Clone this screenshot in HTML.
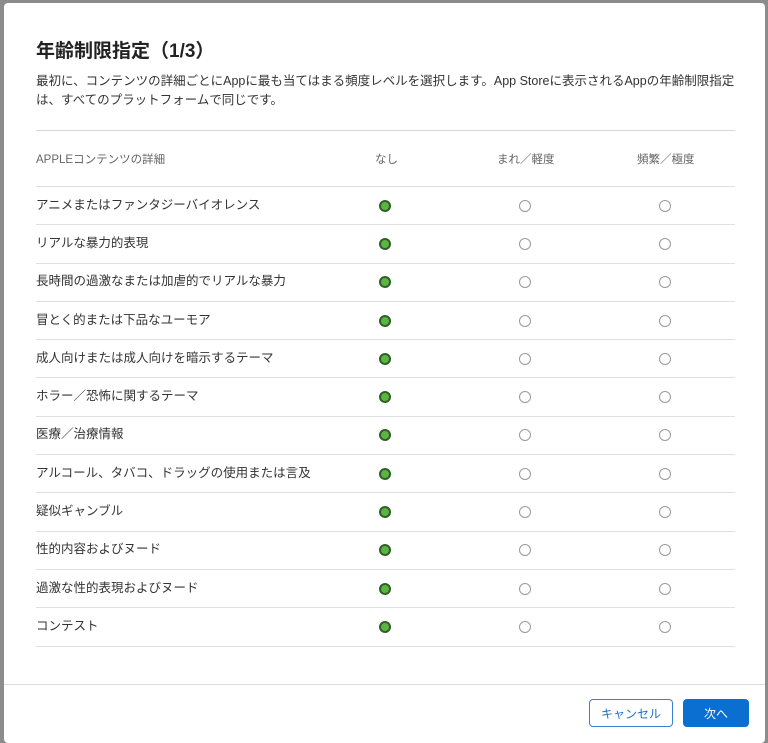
<html><head><style>
body{margin:0;width:768px;height:739px;background:#8c8c8c;font-family:"Liberation Sans","Noto Sans CJK JP",sans-serif;overflow:hidden;position:relative}
.m{position:absolute;left:4px;top:3px;width:761px;height:740px;background:#fff;border-radius:4px}
h1{position:absolute;left:32px;top:33px;margin:0;font-size:19px;font-weight:bold;color:#222}
.d{position:absolute;left:32px;top:69px;width:705px;font-size:12.5px;line-height:19px;color:#333}
.t{position:absolute;left:32px;top:127px;width:699px;border-top:1px solid #d6d6d6}
.r{height:37.3px;border-bottom:1px solid #e0e0e0;position:relative;font-size:12.5px;color:#333}
.r span{position:absolute;top:50%;transform:translateY(-50%)}
.r span.x{transform:translateY(-64%)}
.h{height:55px;font-size:11.5px;color:#666}
.c{width:12px;height:12px;border-radius:50%;border:1.2px solid #999;box-sizing:border-box;margin-left:-10px}
.g{background:#5cb543;border:2px solid #2f5e26}
.f{position:absolute;left:0;top:681px;width:761px;border-top:1px solid #ddd}
.b{position:absolute;top:696px;height:26px;border-radius:4px;font-size:12px;display:flex;align-items:center;justify-content:center}
</style></head><body><div class="m">
<h1>年齢制限指定（1/3）</h1>
<div class="d">最初に、コンテンツの詳細ごとにAppに最も当てはまる頻度レベルを選択します。App Storeに表示されるAppの年齢制限指定は、すべてのプラットフォームで同じです。</div>
<div class="t">
<div class="r h"><span style="left:0">APPLEコンテンツの詳細</span><span style="left:339px">なし</span><span style="left:461px">まれ／軽度</span><span style="left:601px">頻繁／極度</span></div>
<div class="r"><span class="x" style="left:0">アニメまたはファンタジーバイオレンス</span><span class="c g" style="left:353px"></span><span class="c" style="left:493px"></span><span class="c" style="left:633px"></span></div>
<div class="r"><span class="x" style="left:0">リアルな暴力的表現</span><span class="c g" style="left:353px"></span><span class="c" style="left:493px"></span><span class="c" style="left:633px"></span></div>
<div class="r"><span class="x" style="left:0">長時間の過激なまたは加虐的でリアルな暴力</span><span class="c g" style="left:353px"></span><span class="c" style="left:493px"></span><span class="c" style="left:633px"></span></div>
<div class="r"><span class="x" style="left:0">冒とく的または下品なユーモア</span><span class="c g" style="left:353px"></span><span class="c" style="left:493px"></span><span class="c" style="left:633px"></span></div>
<div class="r"><span class="x" style="left:0">成人向けまたは成人向けを暗示するテーマ</span><span class="c g" style="left:353px"></span><span class="c" style="left:493px"></span><span class="c" style="left:633px"></span></div>
<div class="r"><span class="x" style="left:0">ホラー／恐怖に関するテーマ</span><span class="c g" style="left:353px"></span><span class="c" style="left:493px"></span><span class="c" style="left:633px"></span></div>
<div class="r"><span class="x" style="left:0">医療／治療情報</span><span class="c g" style="left:353px"></span><span class="c" style="left:493px"></span><span class="c" style="left:633px"></span></div>
<div class="r"><span class="x" style="left:0">アルコール、タバコ、ドラッグの使用または言及</span><span class="c g" style="left:353px"></span><span class="c" style="left:493px"></span><span class="c" style="left:633px"></span></div>
<div class="r"><span class="x" style="left:0">疑似ギャンブル</span><span class="c g" style="left:353px"></span><span class="c" style="left:493px"></span><span class="c" style="left:633px"></span></div>
<div class="r"><span class="x" style="left:0">性的内容およびヌード</span><span class="c g" style="left:353px"></span><span class="c" style="left:493px"></span><span class="c" style="left:633px"></span></div>
<div class="r"><span class="x" style="left:0">過激な性的表現およびヌード</span><span class="c g" style="left:353px"></span><span class="c" style="left:493px"></span><span class="c" style="left:633px"></span></div>
<div class="r"><span class="x" style="left:0">コンテスト</span><span class="c g" style="left:353px"></span><span class="c" style="left:493px"></span><span class="c" style="left:633px"></span></div>
</div>
<div class="f"></div>
<div class="b" style="left:585px;width:82px;border:1px solid #3a80d2;color:#1f6fc9">キャンセル</div>
<div class="b" style="left:679px;width:66px;height:28px;background:#0a6fd1;color:#fff">次へ</div>
</div></body></html>
